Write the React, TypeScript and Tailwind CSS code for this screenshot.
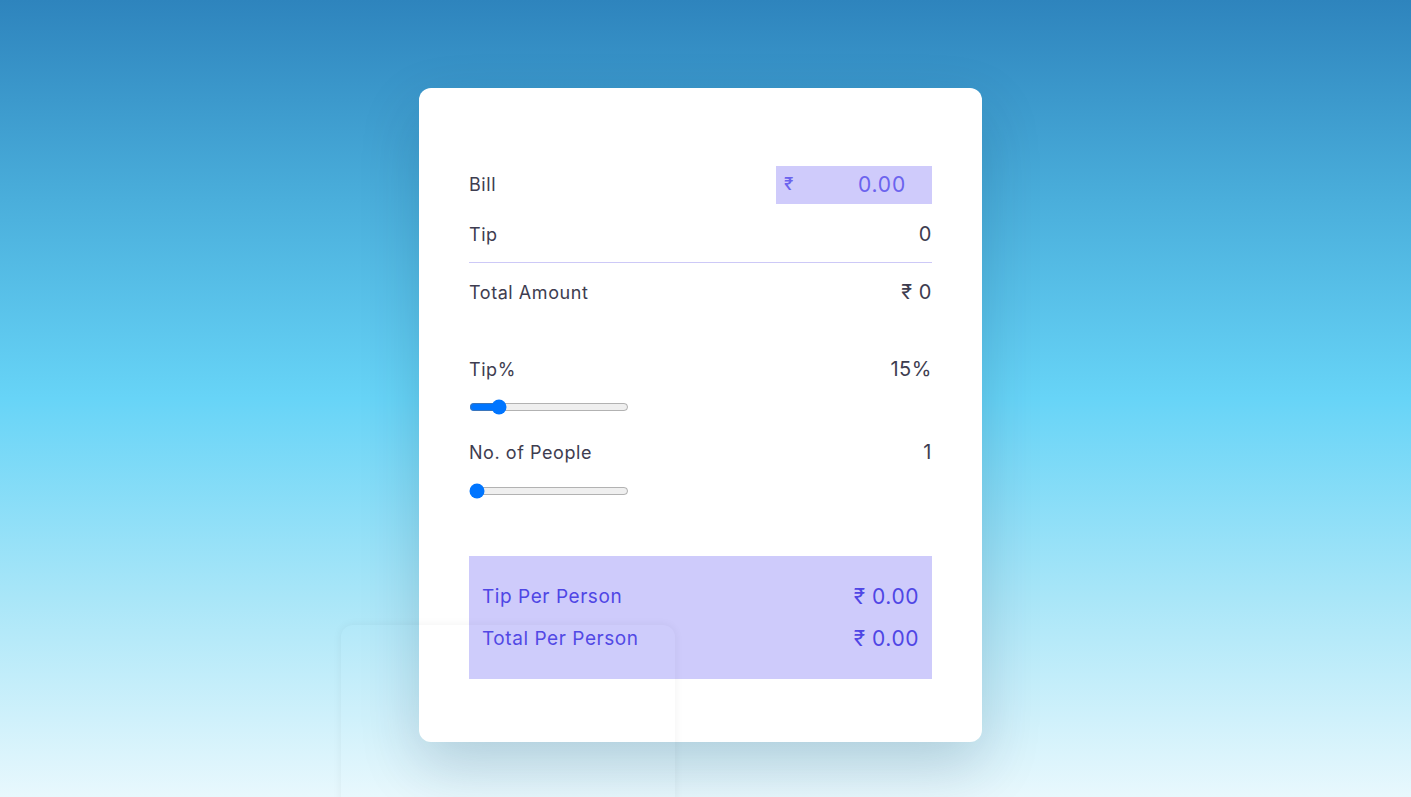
import { useState } from 'react';

const font = { fontFamily: 'Inter, "Noto Sans", sans-serif' };

export default function App() {
  const [bill, setBill] = useState('');
  const [tipPct, setTipPct] = useState(15);
  const [people, setPeople] = useState(1);

  const billNum = parseFloat(bill) || 0;
  const tip = (billNum * tipPct) / 100;
  const total = billNum + tip;

  return (
    <div
      className="relative h-[797px] w-full overflow-hidden bg-[linear-gradient(to_bottom,#2e84bd_0%,#4aaedb_25%,#67d4f7_50%,#a9e6f8_75%,#e8f8fd_100%)] tracking-[0.035em]"
      style={font}
    >
      <div className="flex justify-center pt-[88px]">
        <div className="mr-[10px] w-[563px] h-[654px] rounded-xl bg-white px-[50px] pt-[78px] shadow-[0_24px_60px_rgba(0,40,70,0.18)] text-[#3e3d50]">
          <div className="flex h-[38px] items-center justify-between">
            <span className="text-[18px] leading-[38px]">Bill</span>
            <label className="flex h-[38px] w-[156px] items-center bg-[#cfcbfb] pl-2 pr-[26px] text-[#6b63ee]">
              <span className="text-[17px] font-medium">₹</span>
              <input
                type="number"
                value={bill}
                placeholder="0.00"
                onChange={(e) => setBill(e.target.value)}
                className="w-full min-w-0 bg-transparent text-right text-[21px] tracking-[0.04em] text-[#6b63ee] placeholder:text-[#6b63ee] outline-none [appearance:textfield] [&::-webkit-inner-spin-button]:appearance-none [&::-webkit-outer-spin-button]:appearance-none"
              />
            </label>
          </div>
          <div className="mt-[10px] flex h-[40px] items-center justify-between">
            <span className="text-[18px]">Tip</span>
            <span className="text-[20px]">{tip ? tip.toFixed(2) : 0}</span>
          </div>
          <div className="mt-[8px] border-t border-[#cdc9f7]" />
          <div className="mt-[10px] flex h-[38px] items-center justify-between">
            <span className="text-[18px]">Total Amount</span>
            <span className="text-[20px]">₹ {total ? total.toFixed(2) : 0}</span>
          </div>

          <div className="mt-[39px] flex h-[38px] items-center justify-between">
            <span className="text-[18px]">Tip%</span>
            <span className="text-[20px]">{tipPct}%</span>
          </div>
          <input
            type="range"
            min={0}
            max={100}
            value={tipPct}
            onChange={(e) => setTipPct(Number(e.target.value))}
            className="mt-[11px] block h-[16px] w-[160px]"
          />
          <div className="mt-[18px] flex h-[38px] items-center justify-between">
            <span className="text-[18px]">No. of People</span>
            <span className="text-[20px]">{people}</span>
          </div>
          <input
            type="range"
            min={1}
            max={20}
            value={people}
            onChange={(e) => setPeople(Number(e.target.value))}
            className="mt-[12px] block h-[16px] w-[160px]"
          />

          <div className="mt-[57px] bg-[#cecbfb] px-[13px] pt-[20px] pb-[19px] text-[#4f46e5]">
            <div className="flex h-[42px] items-center justify-between">
              <span className="text-[19px]">Tip Per Person</span>
              <span className="text-[21px]">₹ {(tip / people).toFixed(2)}</span>
            </div>
            <div className="flex h-[42px] items-center justify-between">
              <span className="text-[19px]">Total Per Person</span>
              <span className="text-[21px]">₹ {(total / people).toFixed(2)}</span>
            </div>
          </div>
        </div>
      </div>

      <div className="absolute left-[341px] top-[625px] h-[220px] w-[334px] rounded-xl bg-white/[0.02] shadow-[0_0_10px_rgba(0,0,0,0.06)]" />
    </div>
  );
}
